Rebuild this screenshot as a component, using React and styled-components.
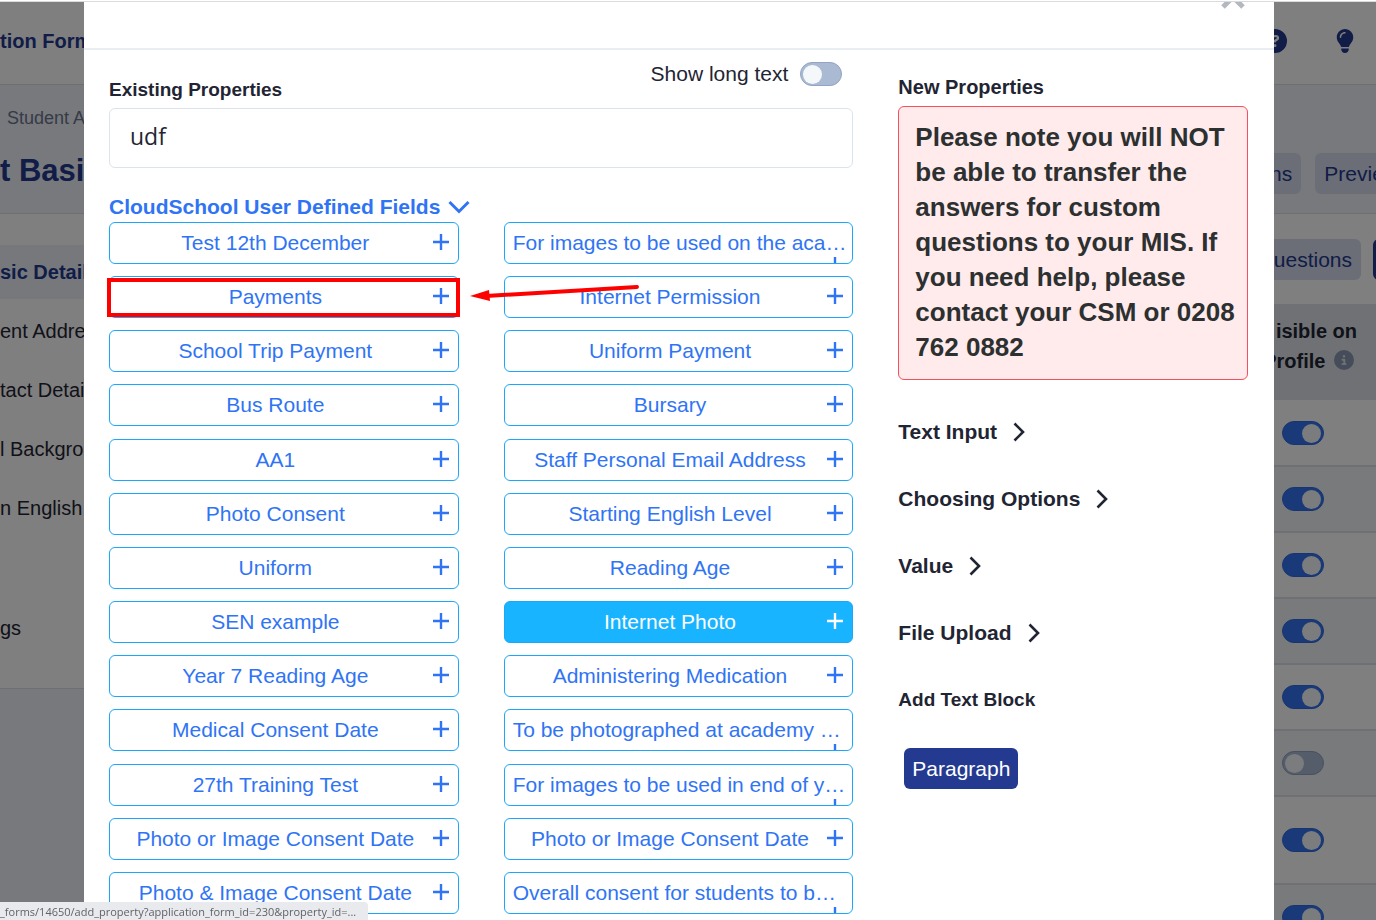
import React from 'react'
import styled, { createGlobalStyle } from 'styled-components'
import { FaCircleQuestion, FaLightbulb, FaCircleInfo } from 'react-icons/fa6'


const sections = ['ent Address', 'tact Details', 'l Background', 'n English']

const visibility = [true, true, true, true, true, false, true, true]

const fields = [
  'Test 12th December',
  'For images to be used on the aca…',
  'Payments',
  'Internet Permission',
  'School Trip Payment',
  'Uniform Payment',
  'Bus Route',
  'Bursary',
  'AA1',
  'Staff Personal Email Address',
  'Photo Consent',
  'Starting English Level',
  'Uniform',
  'Reading Age',
  'SEN example',
  'Internet Photo',
  'Year 7 Reading Age',
  'Administering Medication',
  'Medical Consent Date',
  'To be photographed at academy …',
  '27th Training Test',
  'For images to be used in end of y…',
  'Photo or Image Consent Date',
  'Photo or Image Consent Date',
  'Photo & Image Consent Date',
  'Overall consent for students to b…'
]

const groups = ['Text Input', 'Choosing Options', 'Value', 'File Upload']


class App extends React.Component{

  state={
    query : 'udf',
    longText : false,
    active : 'Internet Photo',
    visible : visibility
  }

  toggleVisible = (index) => {
    this.setState(({visible}) => ({
      visible: visible.map((on, i) => i === index ? !on : on)
    }))
  }

  render(){

    let {query, longText, active, visible} = this.state;

    return (
      <React.Fragment>
        <GlobalStyle />
        <Page>
          <TopBar>
            <BarTitle>tion Form</BarTitle>
            <BarIcons>
              <FaCircleQuestion size={24} />
              <FaLightbulb size={24} />
            </BarIcons>
          </TopBar>
          <TitleBand>
            <div>
              <Crumb href="#students">Student A</Crumb>
              <PageTitle>t Basic</PageTitle>
            </div>
            <BandActions>
              <SoftButton type="button">ns</SoftButton>
              <SoftButton type="button">Preview</SoftButton>
            </BandActions>
          </TitleBand>
          <Body>
            <SideNav>
              <SideLink href="#basic" $current>sic Details</SideLink>
              {sections.map(name => (
                <SideLink key={name} href="#section">{name}</SideLink>
              ))}
              <SideGap />
              <SideLink href="#settings">gs</SideLink>
            </SideNav>
            <Content>
              <ContentActions>
                <SoftButton type="button">uestions</SoftButton>
                <SolidButton type="button" aria-label="Add" />
              </ContentActions>
              <Table>
                <thead>
                  <tr>
                    <HeadCell>isible on<br />Profile <FaCircleInfo size={20} /></HeadCell>
                  </tr>
                </thead>
                <tbody>
                  {visible.map((on, i) => (
                    <Row key={i} $tall={i === 6}>
                      <td>
                        <Switch
                          type="checkbox"
                          aria-label="Visible on Profile"
                          checked={on}
                          onChange={() => this.toggleVisible(i)}
                        />
                      </td>
                    </Row>
                  ))}
                </tbody>
              </Table>
            </Content>
          </Body>
        </Page>
        <Backdrop />
        <Modal role="dialog">
          <ModalHeader>
            <CloseButton type="button" aria-label="Close">
              <svg width="24" height="24" viewBox="0 0 24 24" fill="none" stroke="#b4b9c1" strokeWidth="5">
                <path d="M2 2L22 22M22 2L2 22" />
              </svg>
            </CloseButton>
          </ModalHeader>
          <ModalBody>
            <Existing>
              <ExistingHead>
                <Heading as="label" htmlFor="search" $small>Existing Properties</Heading>
                <LongText>
                  Show long text
                  <Switch
                    type="checkbox"
                    checked={longText}
                    onChange={() => this.setState({longText: !longText})}
                  />
                </LongText>
              </ExistingHead>
              <Search
                id="search"
                type="text"
                value={query}
                onChange={event => this.setState({query: event.target.value})}
              />
              <GroupToggle type="button">
                CloudSchool User Defined Fields
                <svg width="22" height="14" viewBox="0 0 22 14" fill="none" stroke="currentColor" strokeWidth="3">
                  <path d="M1.5 2L11 11.5L20.5 2" />
                </svg>
              </GroupToggle>
              <FieldList>
                {fields.map((name, i) => (
                  <FieldItem key={i}>
                    <FieldButton
                      type="button"
                      $active={name === active}
                      onClick={() => this.setState({active: name})}
                    >
                      <FieldName $cut={name.endsWith('…')}>{name}</FieldName>
                      <PlusIcon width="16" height="16" viewBox="0 0 16 16">
                        <path d="M8 0V16M0 8H16" />
                      </PlusIcon>
                    </FieldButton>
                    {name === 'Payments' && (
                      <React.Fragment>
                        <Marker />
                        <Arrow width="170" height="18" viewBox="0 0 170 18">
                          <path d="M167 2L16 11" stroke="red" strokeWidth="4" strokeLinecap="round" />
                          <path d="M0 11L19 5L20 16Z" fill="red" />
                        </Arrow>
                      </React.Fragment>
                    )}
                  </FieldItem>
                ))}
              </FieldList>
            </Existing>
            <NewProperties>
              <Heading>New Properties</Heading>
              <Notice>
                Please note you will NOT be able to transfer the answers for custom
                questions to your MIS. If you need help, please contact your CSM or 0208 762 0882
              </Notice>
              {groups.map(name => (
                <Group key={name} type="button">
                  {name}
                  <svg width="12" height="20" viewBox="0 0 12 20" fill="none" stroke="currentColor" strokeWidth="2.6">
                    <path d="M1.5 1.5L10 10L1.5 18.5" />
                  </svg>
                </Group>
              ))}
              <Heading $small>Add Text Block</Heading>
              <ParagraphButton type="button">Paragraph</ParagraphButton>
            </NewProperties>
          </ModalBody>
        </Modal>
        <StatusBar>_forms/14650/add_property?application_form_id=230&amp;property_id=...</StatusBar>
      </React.Fragment>
    )
  }
}


const GlobalStyle = createGlobalStyle`
  * {
    box-sizing:border-box;
  }
  body {
    margin:0;
    overflow:hidden;
    background-color:#f1f3f9;
    color:#1f2533;
    font-family:'Liberation Sans', Arial, sans-serif;
    font-size:21px;
    line-height:28px;
  }
  button, input {
    font:inherit;
    color:inherit;
  }
`

const Page = styled.div`
  height:100vh;
  overflow:hidden;
  border-top:1px solid white;
`

const TopBar = styled.header`
  display:flex;
  justify-content:space-between;
  align-items:center;
  height:84px;
  padding-right:19px;
  background-color:white;
  border-top:1px solid #d9dcdf;
  border-bottom:1px solid #d9dee8;
  color:#22398f;
`

const BarTitle = styled.div`
  padding-bottom:5px;
  font-size:20px;
  font-weight:bold;
`

const BarIcons = styled.div`
  display:flex;
  align-items:center;
  gap:46px;
  padding-bottom:4px;
`

const TitleBand = styled.div`
  display:flex;
  justify-content:space-between;
  align-items:flex-end;
  height:129px;
  padding-bottom:19px;
  border-bottom:1px solid #d9dee8;
  color:#22398f;
`

const Crumb = styled.a`
  display:block;
  margin-left:7px;
  color:#6b7690;
  font-size:18px;
  text-decoration:none;
`

const PageTitle = styled.h1`
  margin:19px 0 3px;
  font-size:31px;
  line-height:40px;
`

const BandActions = styled.div`
  display:flex;
  gap:14px;
  margin-right:-32px;
`

const SoftButton = styled.button`
  height:41px;
  padding:0 9px;
  border:none;
  border-radius:6px;
  background-color:#d6ddec;
  color:#22398f;
`

const SolidButton = styled(SoftButton)`
  width:55px;
  background-color:#22398f;
  color:white;
`

const Body = styled.div`
  display:flex;
  justify-content:space-between;
  align-items:flex-start;
`

const SideNav = styled.nav`
  display:flex;
  flex-direction:column;
  gap:5px;
  width:20%;
  padding:31px 0 33px;
  background-color:white;
  border-bottom:1px solid #d9dee8;
`

const SideLink = styled.a`
  padding:13px 0;
  background-color:${props => props.$current ? '#edf1f8' : 'transparent'};
  color:${props => props.$current ? '#22398f' : '#1f2533'};
  font-size:20px;
  font-weight:${props => props.$current ? 'bold' : 'normal'};
  text-decoration:none;
`

const SideGap = styled.div`
  height:56px;
`

const Content = styled.main`
  width:60%;
  background-color:white;
`

const ContentActions = styled.div`
  display:flex;
  justify-content:flex-end;
  gap:12px;
  margin-right:-52px;
  padding:25px 0 24px;
`

const Table = styled.table`
  width:100%;
  border-collapse:collapse;
`

const HeadCell = styled.th`
  height:96px;
  padding:0 19px 12px 0;
  background-color:#dfe3ea;
  font-size:20px;
  line-height:30px;
  text-align:right;

  svg {
    margin:0 3px 0 3px;
    color:#8c99b3;
    vertical-align:-2px;
  }
`

const Row = styled.tr`
  height:${props => props.$tall ? 88 : 66}px;
  border-bottom:2px solid #dde1e8;

  &:nth-child(even) {
    background-color:#f3f5f9;
  }

  td {
    padding:0 52px 0 0;
    text-align:right;
    line-height:0;
  }
`

const Switch = styled.input`
  appearance:none;
  width:42px;
  height:24px;
  margin:0;
  padding:2px;
  border:1px solid #93a3c4;
  border-radius:12px;
  background-color:#a9bad2;

  &::before {
    content:'';
    display:block;
    width:19px;
    height:19px;
    border-radius:50%;
    background-color:#f5f8fb;
  }

  &:checked {
    border-color:#2f6be0;
    background-color:#3473f0;
  }

  &:checked::before {
    margin-left:auto;
  }
`

const Backdrop = styled.div`
  position:fixed;
  inset:2px 0 0;
  background-color:rgba(0, 0, 0, 0.5);
`

const Modal = styled.div`
  position:fixed;
  inset:2px 102px 0 84px;
  display:flex;
  flex-direction:column;
  overflow:hidden;
  background-color:white;
`

const ModalHeader = styled.div`
  display:flex;
  justify-content:flex-end;
  flex:none;
  height:48px;
  padding-right:29px;
  border-bottom:2px solid #e9eef2;
`

const CloseButton = styled.button`
  height:24px;
  margin-top:-17px;
  padding:0;
  border:none;
  background:none;
`

const ModalBody = styled.div`
  display:grid;
  grid-template-columns:repeat(3, minmax(0, 1fr));
  column-gap:45px;
  flex:1;
  padding:0 26px 6px 25px;
`

const Existing = styled.section`
  grid-column:span 2;
  display:flex;
  flex-direction:column;
`

const ExistingHead = styled.div`
  display:flex;
  justify-content:space-between;
  align-items:flex-end;
  height:58px;
  padding:0 11px 6px 0;
`

const Heading = styled.h2`
  margin:0;
  font-size:${props => props.$small ? 19 : 20}px;
  font-weight:bold;
  line-height:24px;
`

const LongText = styled.label`
  display:flex;
  align-items:center;
  align-self:flex-start;
  gap:12px;
  padding-top:10px;
`

const Search = styled.input`
  flex:none;
  height:60px;
  padding:0 20px 4px;
  border:1px solid #dbe4ec;
  border-radius:6px;
  font-family:'Open Sans', 'Noto Sans', sans-serif;
  font-size:23px;
`

const GroupToggle = styled.button`
  display:flex;
  align-items:center;
  align-self:flex-start;
  gap:8px;
  margin:27px 0 3px;
  padding:0;
  border:none;
  background:none;
  color:#2f74f5;
  font-weight:bold;
  line-height:24px;
`

const FieldList = styled.ul`
  display:grid;
  grid-template-columns:repeat(2, minmax(0, 1fr));
  column-gap:45px;
  align-content:space-between;
  flex:1;
  margin:0;
  padding:0;
  list-style-type:none;
`

const FieldItem = styled.li`
  position:relative;
`

const FieldButton = styled.button`
  display:flex;
  flex-wrap:wrap;
  align-items:center;
  align-content:flex-start;
  width:100%;
  height:42px;
  padding:6px 6px 0 8px;
  overflow:hidden;
  border:1px solid #1ba7fb;
  border-radius:6px;
  background-color:${props => props.$active ? '#18b4ff' : 'white'};
  color:${props => props.$active ? 'white' : '#2f74f5'};
`

const FieldName = styled.span`
  flex:1 0 auto;
  text-align:${props => props.$cut ? 'left' : 'center'};
  white-space:nowrap;
`

const PlusIcon = styled.svg`
  margin:0 3px 2px auto;
  fill:none;
  stroke:currentColor;
  stroke-width:2.4;
`

const Marker = styled.span`
  position:absolute;
  inset:2px -1px 1px -2px;
  border:4px solid red;
  pointer-events:none;
`

const Arrow = styled.svg`
  position:absolute;
  z-index:1;
  top:9px;
  left:calc(100% + 11px);
  fill:none;
  pointer-events:none;
`

const NewProperties = styled.section`
  display:flex;
  flex-direction:column;
  align-items:flex-start;
  padding-top:25px;
`

const Notice = styled.p`
  align-self:stretch;
  margin:7px 0 40px;
  padding:13px 10px 14px 16px;
  border:1px solid #f5505c;
  border-radius:6px;
  background-color:#ffebeb;
  color:#2d3030;
  font-size:26px;
  font-weight:bold;
  line-height:35px;
`

const Group = styled.button`
  display:flex;
  align-items:center;
  gap:16px;
  margin-bottom:43px;
  padding:0;
  border:none;
  background:none;
  font-weight:bold;
  line-height:24px;
`

const ParagraphButton = styled.button`
  height:41px;
  margin:36px 0 0 6px;
  padding:0 8px;
  border:none;
  border-radius:6px;
  background-color:#243a91;
  color:white;
`

const StatusBar = styled.div`
  position:fixed;
  bottom:0;
  left:0;
  padding:1px 12px 0 0;
  border-radius:0 4px 0 0;
  background-color:#e8eaed;
  color:#5f6368;
  font-family:'Open Sans', 'Noto Sans', sans-serif;
  font-size:11px;
  line-height:17px;
`


export default App
